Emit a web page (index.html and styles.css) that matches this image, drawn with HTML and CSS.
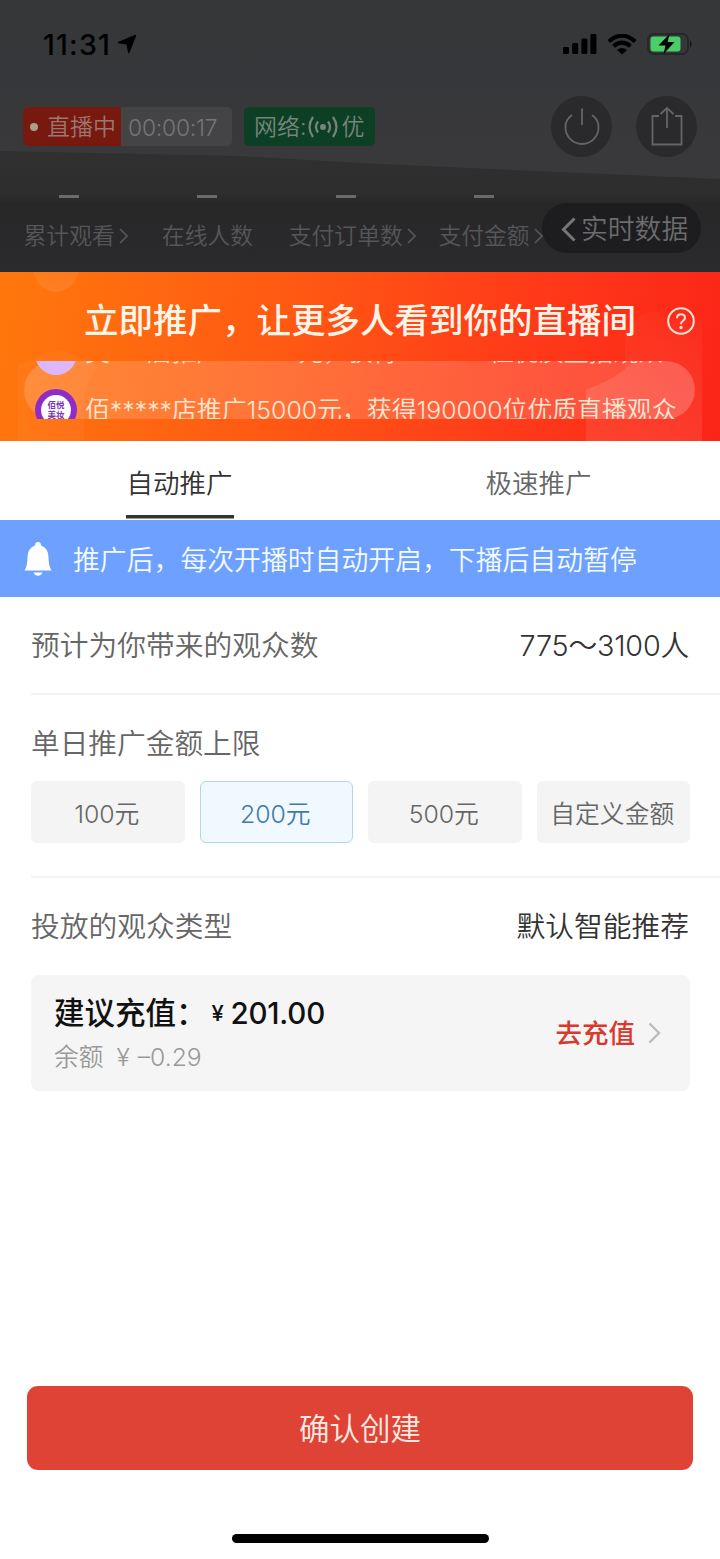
FILE: index.html
```html
<!DOCTYPE html>
<html lang="zh-CN">
<head>
<meta charset="utf-8">
<title>立即推广</title>
<link rel="stylesheet" href="styles.css">
</head>
<body>
<main class="phone">
  <section class="live">
    <svg class="live-backdrop" viewBox="0 0 720 272" preserveAspectRatio="none">
      <defs>
        <linearGradient id="wall" x1="0" y1="0" x2="0" y2="1">
          <stop offset="0" stop-color="#343638"/><stop offset=".55" stop-color="#39393c"/><stop offset="1" stop-color="#39393c"/>
        </linearGradient>
        <linearGradient id="desk" x1="0" y1="0" x2="0" y2="1">
          <stop offset="0" stop-color="#303031"/><stop offset=".36" stop-color="#2d2d2d"/><stop offset=".44" stop-color="#272728"/><stop offset="1" stop-color="#2b2b2e"/>
        </linearGradient>
      </defs>
      <rect width="720" height="272" fill="url(#wall)"/>
      <path d="M0 151L240 156L360 163L560 172L720 179V272H0Z" fill="url(#desk)"/>
    </svg>
    <div class="status">
      <span class="clock">11:31</span>
      <svg class="loc" width="20" height="20" viewBox="0 0 20 20"><path d="M18.500 1.500L11.800 18.500L10.200 10L1.500 8.600Z" fill="#000" stroke="#000" stroke-width="1.500" stroke-linejoin="round"/></svg>
      <svg class="signal" width="34" height="20" viewBox="0 0 34 20"><rect y="13" width="6" height="7" rx="1.3"/><rect x="9.2" y="9" width="6" height="11" rx="1.3"/><rect x="18.4" y="4.5" width="6" height="15.5" rx="1.3"/><rect x="27.4" y="0" width="6" height="20" rx="1.3"/></svg>
      <svg class="wifi" width="30" height="21" viewBox="0 0 30 21"><path d="M1.800 7.500Q15-4 28.200 7.500M6.500 12.300Q15 5 23.500 12.300" fill="none" stroke="#000" stroke-width="4"/><path d="M15 20.500L10 16Q15 12 20 16Z"/></svg>
      <svg class="battery" width="46" height="22" viewBox="0 0 46 22"><rect x="1" y="1" width="40" height="20" rx="5.500" fill="none" stroke="#222325" stroke-width="1.500"/><path d="M43 7.500Q46 11 43 14.500Z" fill="#111"/><rect x="3.500" y="3.500" width="30" height="15" rx="3" fill="#48cf68"/><path d="M22.500 1L11.500 12.500H18.500L16.500 21L27.500 9H20.700Z" fill="#000"/></svg>
    </div>
    <div class="live-bar">
      <div class="live-state"><span class="live-now"><i class="dot"></i>直播中</span><span class="timer">00:00:17</span></div>
      <div class="network"><span>网络:</span><svg width="30" height="24" viewBox="0 0 30 24" fill="none" stroke="#75857c" stroke-width="2.200"><circle cx="15" cy="12" r="3" fill="#75857c" stroke="none"/><path d="M10 6.500Q6 12 10 17.500M20 6.500Q24 12 20 17.500M5 2Q-2 12 5 22M25 2Q32 12 25 22"/></svg><span class="grade">优</span></div>
      <span class="round round-power"><svg width="38" height="38" viewBox="0 0 38 38"><path d="M19 1.500V18M9 8Q2 13 2.500 20.500A16.500 16.500 0 0 0 35.500 20.500Q36 13 29 8"/></svg></span>
      <span class="round"><svg width="38" height="42" viewBox="0 0 38 42"><path d="M11 11H4.500V39.500H33.500V11H27M19 23V3.500M12.500 9L19 3L25.500 9"/></svg></span>
    </div>
    <div class="stats">
      <div class="stat"><b></b><span>累计观看<svg class="more" width="9" height="16" viewBox="0 0 9 16"><path d="M1 1L8 8L1 15"/></svg></span></div>
      <div class="stat"><b></b><span>在线人数</span></div>
      <div class="stat"><b></b><span>支付订单数<svg class="more" width="9" height="16" viewBox="0 0 9 16"><path d="M1 1L8 8L1 15"/></svg></span></div>
      <div class="stat"><b></b><span>支付金额<svg class="more" width="9" height="16" viewBox="0 0 9 16"><path d="M1 1L8 8L1 15"/></svg></span></div>
    </div>
    <div class="realtime"><svg width="15" height="25" viewBox="0 0 15 25"><path d="M13.500 1.500L2.500 12.500L13.500 23.500"/></svg>实时数据</div>
  </section>

  <section class="banner">
    <svg class="banner-art" viewBox="0 0 720 169">
      <defs><linearGradient id="fade" x1="0" y1="0" x2="0" y2="1"><stop offset="0" stop-color="#fff" stop-opacity=".02"/><stop offset="1" stop-color="#fff" stop-opacity=".09"/></linearGradient></defs>
      <circle cx="56" cy="-2" r="22" fill="url(#fade)"/>
      <path d="M18 93L52 80Q60 76 70 81L98 94L84 120V169H18Z" fill="#fff" fill-opacity=".04"/>
      <path d="M625 88V62Q628 47 650 40Q660 37 667 47Q681 49 702 48V169H586V117Q606 111 625 98Z" fill="url(#fade)"/>
    </svg>
    <div class="headline"><h1>立即推广，让更多人看到你的直播间</h1>
      <svg class="help" width="28" height="28" viewBox="0 0 28 28"><circle cx="14" cy="14" r="12.800"/><path d="M10 11.200Q10 7.200 14 7.200Q18 7.200 18 10.800Q18 12.600 15.800 14Q14 15.200 14 17.200"/><circle cx="14" cy="20.500" r=".7"/></svg>
    </div>
    <div class="ticker">
      <div class="ticker-fill"></div>
      <svg class="ticker-art" viewBox="0 0 671 58"><path d="M562 29Q590 18 606 4Q612 0 632 0A29 29 0 0 1 671 29A29 29 0 0 1 642 58H562Z" fill="#fff" fill-opacity=".06"/></svg>
      <div class="ticker-list">
        <div class="ticker-row ticker-prev"><span class="avatar avatar-lilac"></span><p>美<i class="stars">***</i>店推广20000元，获得260000位优质直播观众</p></div>
        <div class="ticker-row"><span class="avatar avatar-brand"><span>佰悦<br>美妆</span></span><p>佰<i class="stars">*****</i>店推广15000元，获得190000位优质直播观众</p></div>
      </div>
    </div>
  </section>

  <nav class="tabs"><span class="tab tab-on">自动推广</span><span class="tab">极速推广</span></nav>
  <div class="notice"><svg width="28" height="36" viewBox="0 0 28 36"><path d="M14 1Q17 1 17 4.500Q24.500 7.500 24.500 16Q24.500 25 27.500 29.500H.5Q3.500 25 3.500 16Q3.500 7.500 11 4.500Q11 1 14 1ZM9.500 31.500H18.500Q17 34.800 14 34.800Q11 34.800 9.500 31.500Z" fill="#fff"/></svg><span>推广后，每次开播时自动开启，下播后自动暂停</span></div>

  <section class="row estimate"><span>预计为你带来的观众数</span><strong>775～3100人</strong></section>
  <section class="limit">
    <h2>单日推广金额上限</h2>
    <div class="options"><span class="option">100元</span><span class="option option-on">200元</span><span class="option">500元</span><span class="option">自定义金额</span></div>
  </section>
  <section class="row audience"><span>投放的观众类型</span><strong>默认智能推荐</strong></section>
  <section class="recharge">
    <div><p class="suggest">建议充值：<small>¥</small><b>201.00</b></p><p class="balance">余额<span>¥</span>–0.29</p></div>
    <span class="go">去充值<svg width="13" height="22" viewBox="0 0 13 22"><path d="M1.500 1.500L11 11L1.500 20.500"/></svg></span>
  </section>
  <footer class="footer"><button class="confirm">确认创建</button><div class="home"></div></footer>
</main>
</body>
</html>
```
FILE: styles.css
```css
* { box-sizing: border-box; }
body { margin: 0; background: #fff; font-family: Inter, "Noto Sans CJK SC", sans-serif; font-weight: 350; }
h1, h2, p { margin: 0; font-weight: inherit; }
svg { flex: none; display: block; }
.phone { width: 720px; height: 1559px; overflow: hidden; display: flex; flex-direction: column; background: #fff; }

.live { position: relative; flex: none; height: 272px; color: #6b6b6d; overflow: hidden; }
.live-backdrop { position: absolute; inset: 0; width: 720px; height: 272px; }
.status { position: relative; display: flex; align-items: center; height: 88px; padding: 0 27px 0 43px; }
.clock { font-size: 28.500px; font-weight: 500; color: #000; width: 70px; letter-spacing: 1.200px; white-space: nowrap; }
.loc { margin-left: 4px; }
.signal { margin-left: auto; }
.wifi { margin-left: 10px; }
.battery { margin-left: 10px; }
.live-bar { position: relative; display: flex; align-items: center; height: 76px; padding: 0 23px; }
.live-state { display: flex; height: 39px; width: 209px; border-radius: 5px; overflow: hidden; background: #444446; font-size: 23px; line-height: 39px; white-space: nowrap; }
.live-now { display: flex; align-items: center; width: 98px; padding-top: 2px; background: #78190f; color: #9b7770; }
.dot { width: 8px; height: 8px; border-radius: 50%; background: #aaa08a; margin: 0 9px 0 7px; }
.timer { padding-left: 7px; padding-top: 1px; font-size: 22.800px; color: #757577; letter-spacing: -.2px; }
.network { display: flex; align-items: center; gap: 1px; width: 131px; height: 39px; margin-left: 12px; padding: 2px 0 0 10px; border-radius: 5px; background: #0d3f24; color: #75857c; font-size: 23px; line-height: 39px; white-space: nowrap; }
.grade { margin-left: 3px; }
.round { display: flex; align-items: center; justify-content: center; width: 61px; height: 61px; border-radius: 50%; background: #2a2a2c; margin-left: 24px; }
.round-power { margin-left: auto; }
.round svg { fill: none; stroke: #656567; stroke-width: 1.800; }
.stats { position: relative; display: grid; grid-template-columns: repeat(4, 138.300px); padding-top: 31px; }
.stat { display: flex; flex-direction: column; align-items: center; font-size: 22.800px; line-height: 34px; color: #565658; white-space: nowrap; }
.stat b { width: 20px; height: 3px; margin-bottom: 21px; background: #6b6b6b; }
.stat span { display: flex; align-items: center; }
.more { margin: 0 -13px 0 4px; fill: none; stroke: #565658; stroke-width: 1.600; }
.realtime { position: absolute; left: 542px; top: 203px; width: 159px; height: 50px; border-radius: 25px; background: #1d1d1f; color: #6c6c6e; display: flex; align-items: center; gap: 5px; padding: 2px 0 0 19px; font-size: 26.800px; line-height: 50px; white-space: nowrap; }
.realtime svg { fill: none; stroke: #777; stroke-width: 3; }

.banner { position: relative; flex: none; height: 169px; background: linear-gradient(100deg, #ff780c 0%, #ff5a13 38%, #ff3a19 72%, #fb2418 100%); color: #fff4e8; }
.banner-art { position: absolute; inset: 0; width: 720px; height: 169px; }
.headline { position: relative; display: flex; align-items: center; height: 89px; padding: 8px 25px 0 84px; }
.headline h1 { font-size: 34.500px; font-weight: 500; line-height: 50px; white-space: nowrap; }
.help { margin-left: auto; fill: none; stroke: #ffe2d6; stroke-width: 2; }
.ticker { position: relative; height: 58px; overflow: hidden; }
.ticker-fill { position: absolute; left: 24px; top: 0; width: 671px; height: 58px; border-radius: 29px; background: rgba(255,255,255,.16); }
.ticker-art { position: absolute; left: 24px; top: 0; width: 671px; height: 58px; border-radius: 29px; }
.ticker-list { position: relative; margin-top: -35px; padding-left: 35px; }
.ticker-row { display: flex; align-items: center; gap: 8px; height: 56px; font-size: 24.850px; line-height: 36px; white-space: nowrap; color: #ffe7d5; }
.ticker-row p { margin-top: -1px; }
.ticker-prev p { margin-top: -4px; }
.stars { font-style: normal; }
.avatar { display: flex; align-items: center; justify-content: center; width: 42px; height: 42px; border-radius: 50%; }
.avatar-lilac { background: #dcb8fb; }
.avatar-brand { background: #8e2bc9; }
.avatar-brand span { width: 30px; height: 30px; border-radius: 50%; background: #fff; color: #7a36b4; font-size: 8.500px; line-height: 9.500px; font-weight: 700; padding-top: 6px; text-align: center; }

.tabs { flex: none; display: flex; height: 79px; font-size: 26.500px; color: #666; }
.tab { flex: 1; display: flex; align-items: center; justify-content: center; padding: 1px 2px 0 0; }
.tab-on { padding-right: 0; color: #333; background: linear-gradient(#333, #333) 126px 74px / 108px 3.500px no-repeat; }
.notice { flex: none; display: flex; align-items: center; gap: 21px; height: 77px; padding-left: 24px; background: #6ea1ff; color: #f3fbff; font-size: 26.850px; white-space: nowrap; }
.row { flex: none; display: flex; justify-content: space-between; align-items: center; margin-left: 31px; padding-right: 31px; padding-bottom: 5px; font-size: 28.750px; color: #666; }
.row strong { font-weight: 350; color: #333; }
.estimate { height: 98px; border-bottom: 2px solid #f3f3f3; padding-bottom: 4px; }
.estimate strong { letter-spacing: -.2px; }
.limit { flex: none; height: 183px; margin-left: 31px; border-bottom: 2px solid #f3f3f3; padding-top: 28px; }
.limit h2 { font-size: 28.700px; line-height: 42px; color: #666; }
.options { display: grid; grid-template-columns: repeat(4, 153.500px); gap: 15px; margin-top: 16px; }
.option { display: flex; align-items: center; justify-content: center; height: 62px; padding: 0 2px 1px 0; border-radius: 6px; background: #f5f4f5; color: #666; font-size: 24.800px; white-space: nowrap; }
.option-on { background: #eff9ff; border: 1px solid #b5d5ea; color: #4279ab; }
.audience { height: 97px; }
.recharge { flex: none; display: flex; justify-content: space-between; align-items: center; width: 659px; height: 116px; margin-left: 31px; padding: 0 29px 0 23px; border-radius: 8px; background: #f5f5f5; }
.suggest { display: flex; align-items: center; padding-top: 2px; font-size: 30.500px; line-height: 44px; font-weight: 500; color: #111; white-space: nowrap; }
.suggest small { font-size: 22px; margin-left: 5px; width: 19px; }
.suggest b { font-weight: 500; font-size: 29.500px; letter-spacing: -.2px; }
.balance { font-size: 24.700px; line-height: 42px; color: #999; padding-top: 1px; }
.balance span { margin: 0 8px 0 13px; }
.go { display: flex; align-items: center; gap: 13px; font-size: 26.500px; line-height: 38px; font-weight: 500; color: #d8392c; }
.go svg { fill: none; stroke: #bbb; stroke-width: 2.400; }
.footer { margin-top: auto; display: flex; flex-direction: column; align-items: center; padding-bottom: 16px; }
.confirm { width: 666px; height: 84px; border: 0; padding: 0 0 2px; border-radius: 11px; background: #de4335; color: #ffebe3; font: inherit; font-size: 30.500px; }
.home { width: 257px; height: 9px; margin-top: 64px; border-radius: 5px; background: #000; }
```
